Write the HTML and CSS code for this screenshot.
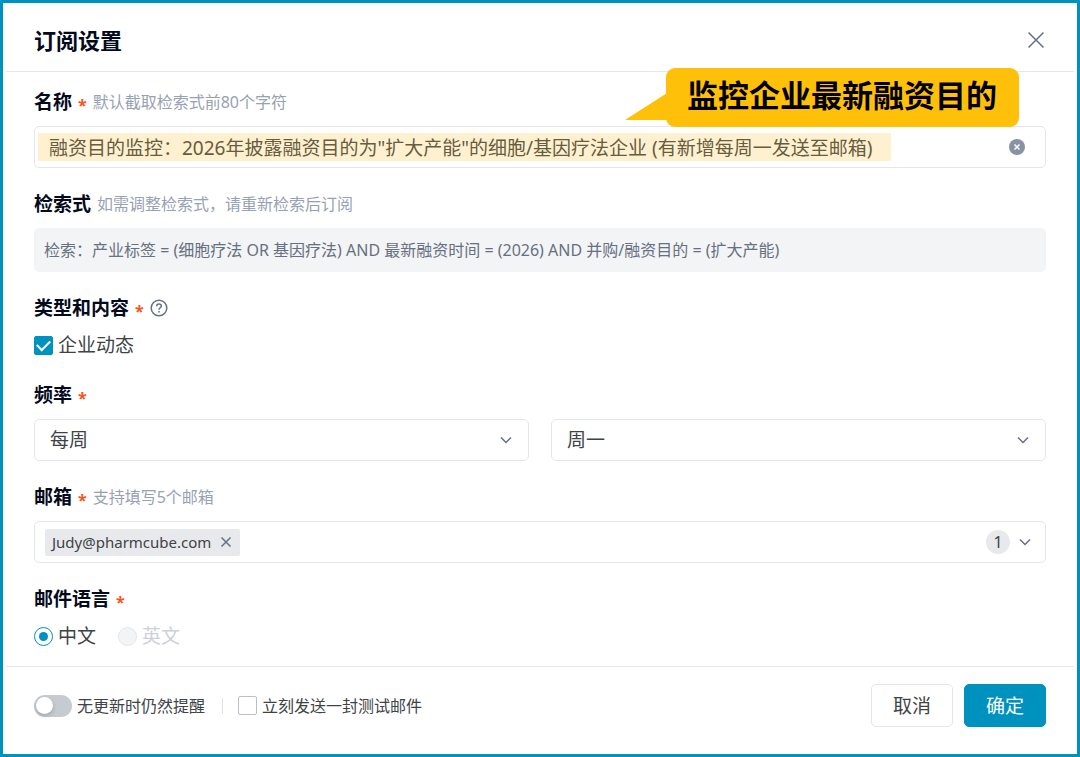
FILE: index.html
```html
<!DOCTYPE html>
<html lang="zh-CN">
<head>
    <meta charset="UTF-8">
    <meta name="viewport" content="width=device-width, initial-scale=1.0">
    <title>订阅设置</title>
    <link rel="stylesheet" href="styles.css">
</head>
<body>
    <form class="dialog" id="subscribeForm">
        <header class="dialog-header">
            <h1>订阅设置</h1>
            <button type="button" class="icon-button" aria-label="关闭">
                <svg width="20" height="20" viewBox="0 0 20 20"><path d="M2.5 2.5l15 15M17.5 2.5l-15 15"/></svg>
            </button>
        </header>

        <main class="dialog-body">
            <section class="group">
                <div class="group-title">
                    <label for="name">名称</label>
                    <span class="required">*</span>
                    <span class="hint">默认截取检索式前80个字符</span>
                </div>
                <div class="control name-control">
                    <input type="text" id="name" name="name" class="name-input" value='融资目的监控：2026年披露融资目的为"扩大产能"的细胞/基因疗法企业 (有新增每周一发送至邮箱)'>
                    <button type="button" class="icon-button" aria-label="清空">
                        <svg width="16" height="16" viewBox="0 0 16 16"><circle class="clear-bg" cx="8" cy="8" r="8"/><path class="clear-x" d="M5.5 5.5l5 5M10.5 5.5l-5 5"/></svg>
                    </button>
                </div>
                <div class="callout">
                    <svg class="callout-tail" width="42" height="28" viewBox="0 0 42 28"><path d="M42 0V27H0Z"/></svg>
                    监控企业最新融资目的
                </div>
            </section>

            <section class="group">
                <div class="group-title">
                    <h2>检索式</h2>
                    <span class="hint">如需调整检索式，请重新检索后订阅</span>
                </div>
                <p class="query">检索：产业标签 = (细胞疗法 OR 基因疗法) AND 最新融资时间 = (2026) AND 并购/融资目的 = (扩大产能)</p>
            </section>

            <section class="group">
                <div class="group-title">
                    <h2>类型和内容</h2>
                    <span class="required">*</span>
                    <button type="button" class="icon-button" aria-label="说明">
                        <svg width="18" height="18" viewBox="0 0 18 18"><circle cx="9" cy="9" r="7.8"/><path d="M6.7 7.2c0-1.3 1-2.2 2.3-2.2s2.3.9 2.3 2.1c0 1.6-2.3 1.8-2.3 3.6"/><path d="M9 12.1v1.3"/></svg>
                    </button>
                </div>
                <div class="choices">
                    <label class="choice"><input type="checkbox" name="type" checked>企业动态</label>
                </div>
            </section>

            <section class="group">
                <div class="group-title">
                    <label for="period">频率</label>
                    <span class="required">*</span>
                </div>
                <div class="select-row">
                    <div class="control select-control">
                        <select id="period" name="period">
                            <option>每周</option>
                        </select>
                        <svg class="chevron" width="14" height="14" viewBox="0 0 14 14"><path d="M2 4.5l5 5 5-5"/></svg>
                    </div>
                    <div class="control select-control">
                        <select name="day" aria-label="发送日">
                            <option>周一</option>
                        </select>
                        <svg class="chevron" width="14" height="14" viewBox="0 0 14 14"><path d="M2 4.5l5 5 5-5"/></svg>
                    </div>
                </div>
            </section>

            <section class="group">
                <div class="group-title">
                    <label for="email">邮箱</label>
                    <span class="required">*</span>
                    <span class="hint">支持填写5个邮箱</span>
                </div>
                <div class="control email-control">
                    <span class="tag">Judy@pharmcube.com
                        <button type="button" class="icon-button" aria-label="删除">
                            <svg width="12" height="12" viewBox="0 0 12 12"><path d="M1.5 1.5l9 9M10.5 1.5l-9 9"/></svg>
                        </button>
                    </span>
                    <input type="text" id="email" name="email" class="email-input">
                    <span class="count">1</span>
                    <button type="button" class="icon-button" aria-label="展开">
                        <svg width="14" height="14" viewBox="0 0 14 14"><path d="M2 4.5l5 5 5-5"/></svg>
                    </button>
                </div>
            </section>

            <section class="group">
                <div class="group-title">
                    <h2>邮件语言</h2>
                    <span class="required">*</span>
                </div>
                <div class="choices">
                    <label class="choice"><input type="radio" name="lang" value="zh" checked>中文</label>
                    <label class="choice disabled"><input type="radio" name="lang" value="en" disabled>英文</label>
                </div>
            </section>
        </main>

        <footer class="dialog-footer">
            <label class="footer-option switch-option"><input type="checkbox" class="switch" name="always">无更新时仍然提醒</label>
            <label class="footer-option"><input type="checkbox" name="test">立刻发送一封测试邮件</label>
            <div class="actions">
                <button type="button" class="btn">取消</button>
                <button type="submit" class="btn btn-primary">确定</button>
            </div>
        </footer>
    </form>

    <script>
        document.getElementById('subscribeForm').addEventListener('submit', function(event) {
            event.preventDefault();
        });
    </script>
</body>
</html>
```
FILE: styles.css
```css
* {
    box-sizing: border-box;
}
body {
    margin: 0;
    font-family: "Noto Sans", "Noto Sans CJK SC", sans-serif;
    font-size: 16px;
    line-height: 24px;
    color: #404346;
    background-color: white;
}
h1, h2, p {
    margin: 0;
}
input, select, button {
    font: inherit;
    color: inherit;
}
svg {
    display: block;
    fill: none;
    stroke: #667085;
    stroke-width: 1.5;
}

/* 弹窗 */
.dialog {
    display: flex;
    flex-direction: column;
    min-height: 100vh;
    padding: 0 3px;
    border: 3px solid #0092bf;
}
.dialog-header {
    display: flex;
    justify-content: space-between;
    align-items: center;
    padding: 25px 28px 19px;
    border-bottom: 1px solid #e3e6ea;
}
h1 {
    font-size: 22px;
    line-height: 24px;
    color: #020a1c;
}
.icon-button {
    padding: 0;
    border: none;
    background: none;
    cursor: pointer;
}
.dialog-body {
    display: flex;
    flex-direction: column;
    gap: 24px;
    padding: 18px 28px 16px;
}
.group {
    position: relative;
    display: flex;
    flex-direction: column;
    gap: 12px;
}
.group-title {
    display: flex;
    align-items: center;
    gap: 6px;
}
.group-title label, h2 {
    font-size: 19px;
    line-height: 24px;
    font-weight: bold;
    color: #020a1c;
}
.required {
    height: 20px;
    font-size: 16px;
    line-height: 26px;
    font-weight: bold;
    color: #ff5016;
}
.hint {
    color: #98a1b3;
}

/* 输入框 */
.control {
    display: flex;
    align-items: center;
    height: 42px;
    border: 1px solid #e4e6ee;
    border-radius: 5px;
}
.control input {
    min-width: 0;
    border: none;
    outline: none;
}
.name-control {
    justify-content: space-between;
    padding: 0 20px 0 3px;
}
.name-input {
    width: 853px;
    height: 28px;
    padding: 0 11px;
    font-size: 19px;
    color: #665c3f;
    background-color: #fff1d0;
}
.clear-bg {
    fill: #8992a5;
    stroke: none;
}
.clear-x {
    stroke: white;
}
.callout {
    position: absolute;
    top: -22px;
    right: 27px;
    padding: 0 22px 4px 21px;
    border-radius: 9px;
    font-size: 31px;
    line-height: 55px;
    font-weight: bold;
    color: black;
    background-color: #ffc00a;
}
.callout-tail {
    position: absolute;
    top: 25px;
    right: 100%;
    margin-right: -1px;
    fill: #ffc00a;
    stroke: none;
}
.query {
    padding: 10px;
    border-radius: 5px;
    color: #667080;
    background-color: #f3f4f6;
}
.select-row {
    display: grid;
    grid-template-columns: 1fr 1fr;
    gap: 22px;
}
.select-control {
    position: relative;
}
select {
    width: 100%;
    height: 100%;
    padding: 0 15px;
    border: none;
    outline: none;
    appearance: none;
    background: none;
    font-size: 19px;
}
.chevron {
    position: absolute;
    right: 15px;
    pointer-events: none;
}
.email-control {
    gap: 8px;
    padding: 0 13px 0 10px;
}
.tag {
    display: flex;
    align-items: center;
    gap: 9px;
    height: 27px;
    padding: 0 8px 0 7px;
    border-radius: 2px;
    font-size: 15px;
    background-color: #e8e9ec;
}
.email-input {
    flex: 1;
}
.count {
    width: 24px;
    border-radius: 50%;
    text-align: center;
    background-color: #e8e9ec;
}

/* 选项与开关 */
.choices {
    display: flex;
    gap: 22px;
}
.choice {
    display: flex;
    align-items: center;
    gap: 5px;
    font-size: 19px;
    line-height: 27px;
}
.disabled {
    color: #cdd0d8;
}
input[type="checkbox"], input[type="radio"] {
    display: grid;
    place-items: center;
    width: 19px;
    height: 19px;
    margin: 0;
    border: 1px solid #b9c0cc;
    border-radius: 2px;
    appearance: none;
    background-color: white;
}
input[type="radio"] {
    border-radius: 50%;
}
input[type="checkbox"]:checked {
    border-color: #0092bf;
    background-color: #0092bf;
}
input[type="checkbox"]:checked::before {
    content: "";
    width: 11px;
    height: 6px;
    margin-bottom: 3px;
    border: solid white;
    border-width: 0 0 2px 2px;
    transform: rotate(-45deg);
}
input[type="radio"]:checked {
    border-color: #0092bf;
}
input[type="radio"]:checked::before {
    content: "";
    width: 9px;
    height: 9px;
    border-radius: 50%;
    background-color: #0092bf;
}
input[type="radio"]:disabled {
    border-color: #e4e6ea;
    background-color: #f3f4f6;
}
input.switch {
    place-items: center start;
    width: 38px;
    height: 22px;
    padding: 0 2px;
    border: none;
    border-radius: 11px;
    background-color: #c6cad1;
}
input.switch::before {
    content: "";
    width: 17px;
    height: 17px;
    border-radius: 50%;
    background-color: white;
    box-shadow: 0 2px 4px rgba(0, 35, 11, 0.2);
}

/* 底部 */
.dialog-footer {
    display: flex;
    flex-wrap: wrap;
    align-items: center;
    gap: 15px;
    padding: 17px 28px;
    border-top: 1px solid #dfe6ee;
}
.footer-option {
    display: flex;
    align-items: center;
    gap: 5px;
}
.switch-option::after {
    content: "";
    width: 1px;
    height: 16px;
    margin-left: 12px;
    background-color: #dfe2e8;
}
.actions {
    display: flex;
    gap: 11px;
    margin-left: auto;
}
.btn {
    width: 82px;
    height: 43px;
    border: 1px solid #e4e6ee;
    border-radius: 5px;
    font-size: 19px;
    background-color: white;
    cursor: pointer;
}
.btn-primary {
    border-color: #0092bf;
    color: white;
    background-color: #0092bf;
}
```
